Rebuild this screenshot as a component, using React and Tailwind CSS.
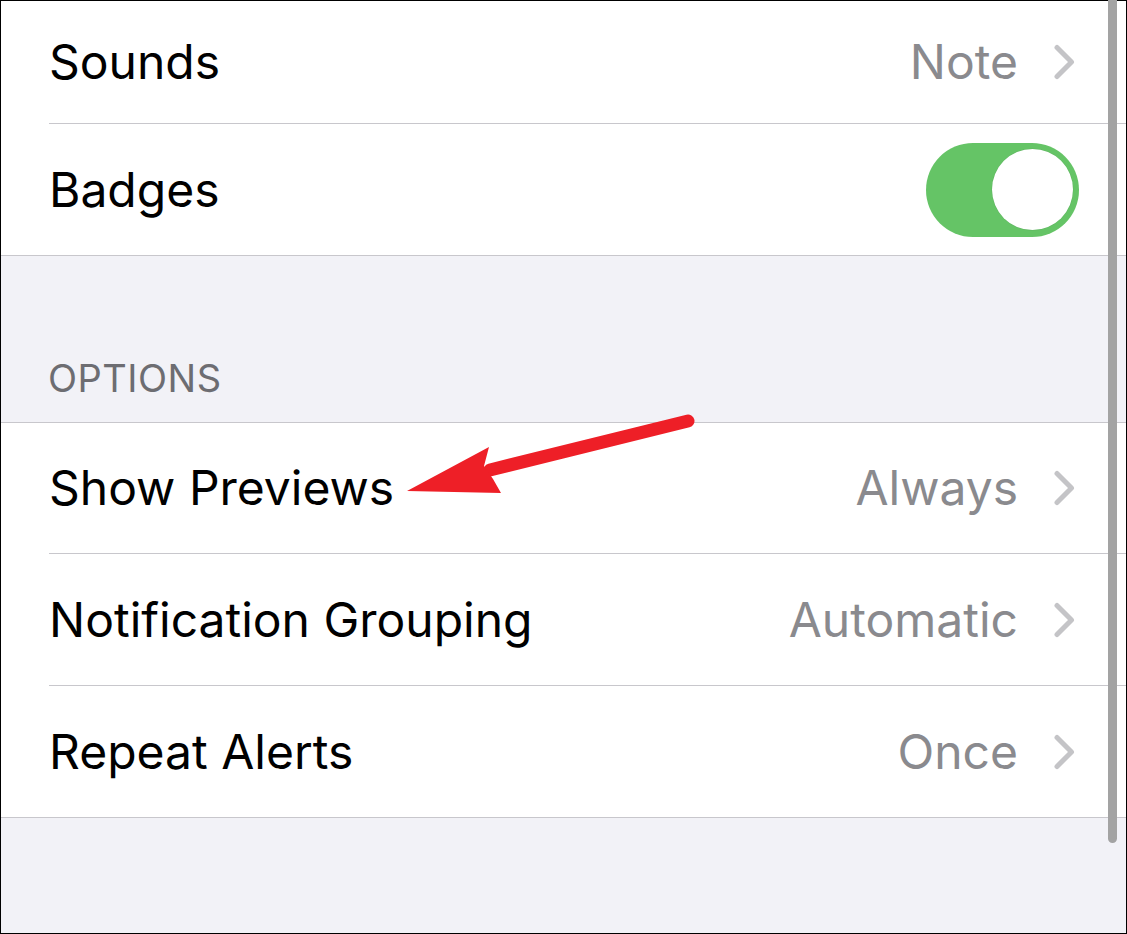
import React from "react";

const font = { fontFamily: "Inter, 'Noto Sans', sans-serif" };

const Chevron = () => (
    <svg width="22" height="36" viewBox="0 0 22 36" className="shrink-0">
        <path d="M4 3.5 L18.5 18 L4 32.5" fill="none" stroke="#c4c4c7" strokeWidth="5" strokeLinecap="round" strokeLinejoin="round" />
    </svg>
);

// h includes the bottom hairline (border-box)
const Row = ({ label, value, last, children, h }) => (
    <div className="pl-[48px]">
        <div className={`flex items-center ${h} pr-[51px] ${last ? "" : "border-b border-[#c8c7cc]"}`}>
            <span className="text-[48px] text-black leading-none">{label}</span>
            <div className="ml-auto flex items-center gap-[35px]">
                {value && <span className="text-[48px] text-[#8a8a8e] leading-none">{value}</span>}
                {children || <Chevron />}
            </div>
        </div>
    </div>
);

const Toggle = () => (
    <div className="w-[153px] h-[94px] rounded-full bg-[#65c466] flex items-center justify-end pr-[6px] mr-[-4px]">
        <div className="w-[81px] h-[81px] rounded-full bg-white shadow-[0_0_0_0.5px_rgba(0,0,0,0.08)]" />
    </div>
);

export default function App() {
    return (
        <div className="relative w-[1127px] h-[934px] overflow-hidden" style={font}>
            <div className="w-full h-full border border-black bg-[#f2f2f7] flex flex-col">
                <div className="bg-white border-b border-[#c8c7cc]">
                    <Row label="Sounds" value="Note" h="h-[123px]" />
                    <Row label="Badges" last h="h-[131px]">
                        <Toggle />
                    </Row>
                </div>

                <div className="h-[166px] shrink-0 flex items-end pl-[47px] pb-[25px]">
                    <span className="text-[38px] leading-none text-[#6d6d72] tracking-[0.5px]">OPTIONS</span>
                </div>

                <div className="bg-white border-y border-[#c8c7cc]">
                    <Row label="Show Previews" value="Always" h="h-[131px]" />
                    <Row label="Notification Grouping" value="Automatic" h="h-[132px]" />
                    <Row label="Repeat Alerts" value="Once" last h="h-[131px]" />
                </div>
            </div>

            {/* scroll indicator */}
            <div className="absolute left-[1108px] top-0 w-[9px] h-[843px] bg-[#a3a3a3] rounded-b-full" />

            {/* annotation arrow */}
            <svg className="absolute inset-0 pointer-events-none" width="1127" height="934">
                <line x1="688" y1="421" x2="490" y2="470" stroke="#ee1f27" strokeWidth="13" strokeLinecap="round" />
                <polygon points="407,491 489,447 484,466 493,479 501,493" fill="#ee1f27" />
            </svg>
        </div>
    );
}
